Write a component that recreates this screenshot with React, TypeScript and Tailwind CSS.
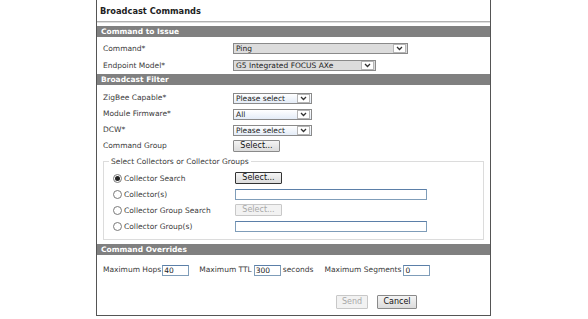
import React from "react";

const Chevron = () => (
  <svg width="7" height="5" viewBox="0 0 7 5">
    <polyline points="1,1 3.5,3.5 6,1" fill="none" stroke="#333" strokeWidth="1.3" />
  </svg>
);

const Select = ({
  value,
  width,
  gray,
}: {
  value: string;
  width: string;
  gray?: boolean;
}) => (
  <div
    className={`flex h-[11px] items-stretch border border-[#8a8a8a] ${width} ${
      gray ? "bg-[#dcdcdc]" : "bg-gradient-to-b from-white to-[#e4ecf7]"
    }`}
  >
    <span className="flex-1 truncate pl-[2px] leading-[9px] text-[7.5px] text-[#222]">
      {value}
    </span>
    <span className="mr-[1px] flex w-[13px] items-center justify-center border border-[#b5b5b5] bg-white">
      <Chevron />
    </span>
  </div>
);

const Button = ({
  label,
  width,
  disabled,
  focused,
  tall,
}: {
  label: string;
  width: string;
  disabled?: boolean;
  focused?: boolean;
  tall?: boolean;
}) => (
  <div
    className={`flex ${tall ? "h-[14px]" : "h-[12px]"} ${width} items-center justify-center rounded-[1px] border text-[8px] ${
      disabled
        ? "border-[#c8c8c8] bg-[#f2f2f2] text-[#a8a8a8]"
        : focused
        ? "border-[#333] bg-gradient-to-b from-[#f4f4f4] to-[#dcdcdc] text-[#111]"
        : "border-[#8a8a8a] bg-gradient-to-b from-[#f4f4f4] to-[#dcdcdc] text-[#111]"
    }`}
  >
    {label}
  </div>
);

const TextInput = ({ width, value }: { width: string; value?: string }) => (
  <div
    className={`h-[11px] ${width} border border-[#7f9db9] border-t-[#5b7fa8] bg-white pl-[1px] leading-[9px] text-[7.5px] text-[#222]`}
  >
    {value}
  </div>
);

const Radio = ({ checked }: { checked?: boolean }) => (
  <span className="mr-[2px] flex h-[9px] w-[9px] items-center justify-center rounded-full border border-[#7a7a7a] bg-white">
    {checked && <span className="h-[5px] w-[5px] rounded-full bg-[#222]" />}
  </span>
);

const SectionHeader = ({ title }: { title: string }) => (
  <div className="flex h-[11px] items-center bg-[#808080] pl-[4px] text-[7.5px] font-bold text-white">
    {title}
  </div>
);

const Row = ({
  label,
  children,
  h = "h-[16px]",
}: {
  label: string;
  children: React.ReactNode;
  h?: string;
}) => (
  <div className={`flex ${h} items-center pl-[6px]`}>
    <span className="w-[130px] text-[7.5px] text-[#3a3a3a]">{label}</span>
    {children}
  </div>
);

const RadioRow = ({
  label,
  checked,
  children,
}: {
  label: string;
  checked?: boolean;
  children: React.ReactNode;
}) => (
  <div className="flex h-[16px] items-center pl-[9px]">
    <span className="flex w-[122px] items-center text-[7.5px] text-[#3a3a3a]">
      <Radio checked={checked} />
      {label}
    </span>
    {children}
  </div>
);

export default function App() {
  return (
    <div className="h-[319px] w-[588px] bg-white font-['DejaVu_Sans',Verdana,sans-serif]">
      <div className="ml-[96px] flex h-[316px] w-[395px] flex-col border-x border-b border-[#555]">
        <div className="flex h-[21px] items-center pl-[3px] pt-[2px] text-[8.25px] font-bold text-[#222]">
          Broadcast Commands
        </div>
        <div className="h-[2px] border-t border-b border-t-[#b0b0b0] border-b-[#dedede]" />
        <div className="h-[3px]" />
        <SectionHeader title="Command to Issue" />
        <div className="pt-[3px]">
          <Row label="Command*" h="h-[17px]">
            <Select value="Ping" width="w-[175px]" gray />
          </Row>
          <Row label="Endpoint Model*" h="h-[17px]">
            <Select value="G5 Integrated FOCUS AXe" width="w-[143px]" gray />
          </Row>
        </div>
        <SectionHeader title="Broadcast Filter" />
        <div className="pt-[5px]">
          <Row label="ZigBee Capable*">
            <Select value="Please select" width="w-[79px]" />
          </Row>
          <Row label="Module Firmware*">
            <Select value="All" width="w-[79px]" />
          </Row>
          <Row label="DCW*">
            <Select value="Please select" width="w-[79px]" />
          </Row>
          <Row label="Command Group">
            <Button label="Select..." width="w-[47px]" />
          </Row>
        </div>
        <fieldset className="mx-[6px] mt-[2px] h-[84px] border border-[#dcdcdc] pb-[4px]">
          <legend className="ml-[5px] px-[2px] text-[7.5px] text-[#3a3a3a]">
            Select Collectors or Collector Groups
          </legend>
          <div className="pt-[3px]">
            <RadioRow label="Collector Search" checked>
              <Button label="Select..." width="w-[47px]" focused />
            </RadioRow>
            <RadioRow label="Collector(s)">
              <TextInput width="w-[192px]" />
            </RadioRow>
            <RadioRow label="Collector Group Search">
              <Button label="Select..." width="w-[47px]" disabled />
            </RadioRow>
            <RadioRow label="Collector Group(s)">
              <TextInput width="w-[192px]" />
            </RadioRow>
          </div>
        </fieldset>
        <div className="h-[4px]" />
        <SectionHeader title="Command Overrides" />
        <div className="flex h-[30px] items-center pl-[6px] text-[7.5px] text-[#3a3a3a]">
          <span className="mr-[1px]">Maximum Hops</span>
          <TextInput width="w-[27px]" value="40" />
          <span className="ml-[10px] mr-[2px]">Maximum TTL</span>
          <TextInput width="w-[27px]" value="300" />
          <span className="ml-[2px]">seconds</span>
          <span className="ml-[11px] mr-[2px]">Maximum Segments</span>
          <TextInput width="w-[27px]" value="0" />
        </div>
        <div className="flex flex-1 items-center gap-[9px] pl-[239px] pt-[3px]">
          <Button label="Send" width="w-[32px]" disabled tall />
          <Button label="Cancel" width="w-[40px]" tall />
        </div>
      </div>
    </div>
  );
}
